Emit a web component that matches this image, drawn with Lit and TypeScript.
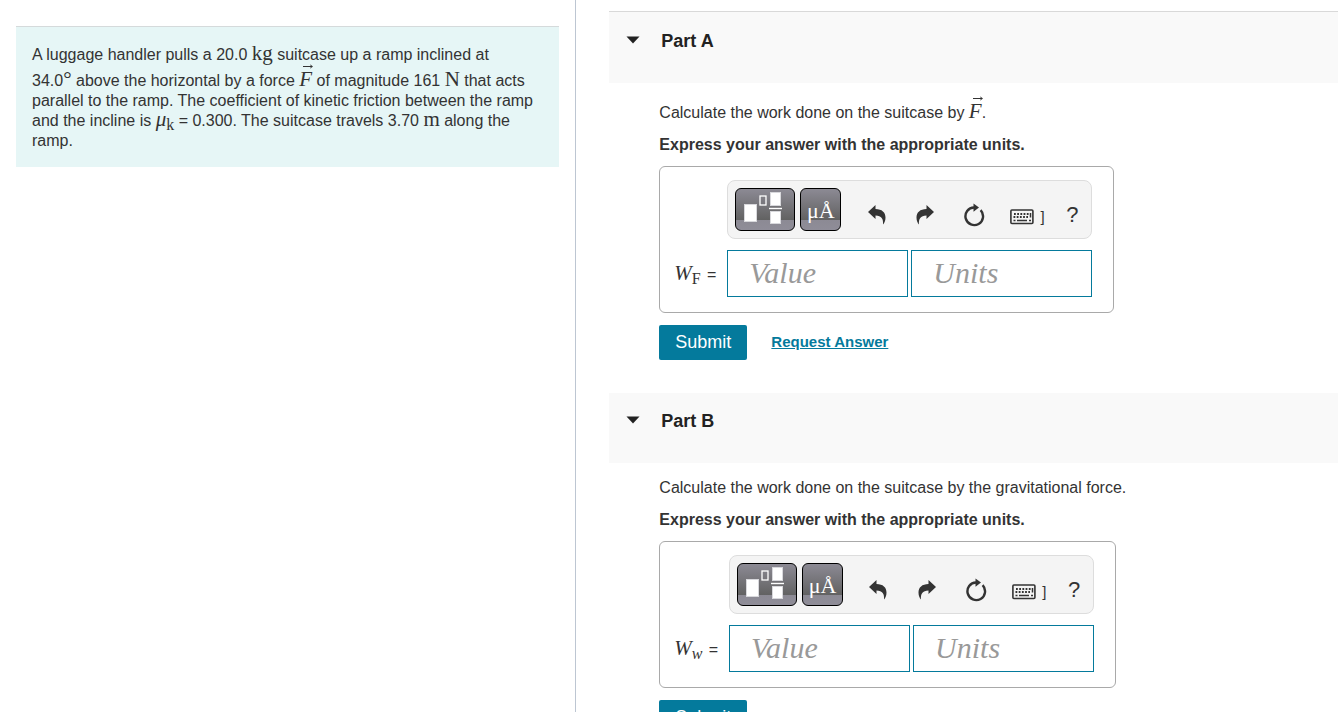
import { LitElement, html, svg, css } from "lit";
import { customElement, property } from "lit/decorators.js";

@customElement("vector-symbol")
class VectorSymbol extends LitElement {
  static styles = css`
    :host {
      display: inline-block;
      position: relative;
      padding-top: 3px;
      font: italic 21px/20px "Liberation Serif", serif;
    }
    .arrow {
      position: absolute;
      bottom: 19px;
      left: 4px;
      width: 11px;
      height: 6px;
    }
  `;
  render() {
    return html`<slot></slot><svg class="arrow" viewBox="0 0 11 6" aria-hidden="true">
        <path d="M0 2.500H9" stroke="#333" fill="none" />
        <path d="M7 0.300L10 2.500L7 4.700L8 2.500Z" fill="#333" />
      </svg>`;
  }
}

const undoShape = svg`<path d="M0 7L7.500 0V4C14 4 17.500 7.500 17.500 12.500C17.500 15.500 16.500 18 15 19.500C15.600 14 13.500 10.500 7.500 10.500V14Z" fill="#333"/>`;

@customElement("answer-box")
class AnswerBox extends LitElement {
  @property() quantity = "";

  static styles = css`
    :host {
      display: block;
      width: fit-content;
      box-sizing: border-box;
      padding: 13px 21px 15px 14px;
      border: 1px solid #a9a9a9;
      border-radius: 6px;
    }
    .grid {
      display: grid;
      grid-template-columns: auto auto;
      align-items: center;
      gap: 11px;
    }
    .toolbar {
      grid-column: 2;
      display: flex;
      align-items: center;
      box-sizing: border-box;
      height: 59px;
      padding: 0 3px 0 7px;
      border: 1px solid #ddd;
      border-radius: 8px;
      background: #f4f4f4;
    }
    button {
      display: flex;
      align-items: center;
      justify-content: center;
      padding: 0;
      border: 0;
      background: none;
      color: #333;
      font: 22px/24px "Liberation Sans", Arial, sans-serif;
    }
    .key {
      box-sizing: border-box;
      width: 60px;
      height: 43px;
      margin-right: 5px;
      border: 1px solid #000;
      border-radius: 6px;
      background: linear-gradient(#8c8a94, #626262 75%, #8c8a94 75%, #8f8d98);
      color: #fff;
      font: 22px/24px "Liberation Serif", serif;
    }
    .units {
      width: 41px;
      margin-right: 11px;
      padding-top: 2px;
    }
    .tool {
      flex: 1 1 49px;
      height: 24px;
      padding-top: 10px;
      box-sizing: content-box;
    }
    .keyboard {
      flex-basis: 58px;
      gap: 6px;
      padding-top: 15px;
      height: 20px;
      font-size: 15px;
      line-height: 16px;
    }
    .help {
      flex-basis: 32px;
    }
    .name {
      font: italic 21px/24px "Liberation Serif", serif;
      white-space: nowrap;
    }
    .equals {
      margin-left: 1px;
      font: 16px/24px "Liberation Sans", Arial, sans-serif;
    }
    .fields {
      display: flex;
      gap: 3px;
    }
    input {
      box-sizing: border-box;
      width: 181px;
      height: 47px;
      padding: 0 21px 2px;
      border: 1px solid #047a9c;
      border-radius: 0;
      background: #fff;
      color: #333;
      font: italic 30px/34px "Liberation Serif", serif;
    }
    input::placeholder {
      color: #999;
      opacity: 1;
    }
  `;

  render() {
    return html`<div class="grid">
      <div class="toolbar" role="toolbar" aria-label="Equation tools">
        <button class="key" aria-label="Templates">
          <svg width="58" height="41" viewBox="0 0 58 41">
            <g fill="#fff" stroke="#d8d8dc">
              <rect x="8.500" y="15.500" width="12" height="17" />
              <rect x="24" y="7" width="6" height="9" fill="none" stroke="#fff" stroke-width="1.300" />
              <rect x="34.500" y="3.500" width="10" height="13" />
              <rect x="34.500" y="22.500" width="10" height="12" />
            </g>
            <path d="M33 19.500H46" stroke="#fff" stroke-width="1.400" />
          </svg>
        </button>
        <button class="key units" aria-label="Units symbols">μÅ</button>
        <button class="tool" aria-label="Undo">
          <svg width="18" height="20" viewBox="0 0 18 20">${undoShape}</svg>
        </button>
        <button class="tool" aria-label="Redo">
          <svg width="18" height="20" viewBox="0 0 18 20">
            <g transform="translate(18 0) scale(-1 1)">${undoShape}</g>
          </svg>
        </button>
        <button class="tool" aria-label="Reset">
          <svg width="22" height="24" viewBox="0 0 22 24">
            <path d="M17.600 7.200A8.800 8.800 0 1 1 11 4.500" fill="none" stroke="#333" stroke-width="2.400" />
            <path d="M10.500 0.500L16 4.600L10.500 8.700Z" fill="#333" />
          </svg>
        </button>
        <button class="tool keyboard" aria-label="Keyboard shortcuts">
          <svg width="24" height="16" viewBox="0 0 24 16">
            <rect x="0.900" y="1" width="22" height="13.500" rx="1" fill="none" stroke="#333" stroke-width="1.600" />
            <path d="M4 5H20M3.500 8H18" stroke="#333" stroke-width="1.800" stroke-dasharray="1.800 1.400" />
            <path d="M7 11.500H17M3.500 11.500H5.500M19 11.500H21M20.500 4V8.500" stroke="#333" stroke-width="1.500" />
          </svg>
          ]
        </button>
        <button class="tool help" aria-label="Help">?</button>
      </div>
      <label class="name" for="value"><slot></slot> <span class="equals">=</span></label>
      <div class="fields">
        <input id="value" placeholder="Value" />
        <input aria-label="${this.quantity} units" placeholder="Units" />
      </div>
    </div>`;
  }
}

@customElement("app-root")
class AppRoot extends LitElement {
  static styles = css`
    :host {
      display: flex;
      height: 100vh;
      overflow: hidden;
      background: #fff;
      color: #333;
      font: 16px/20px "Liberation Sans", Arial, sans-serif;
    }
    .problem {
      box-sizing: border-box;
      flex: 0 0 calc(43% + 1px);
      padding: 26px 16px 0;
      border-right: 1px solid #bdc6d2;
    }
    .statement {
      margin: 0;
      padding: 18px 16px 16px;
      border-top: 1px solid #d5dadb;
      background: #e6f6f6;
    }
    .statement vector-symbol {
      padding-top: 4px;
    }
    .math {
      font: 21px/0 "Liberation Serif", serif;
    }
    .italic {
      font-style: italic;
    }
    .sub {
      position: relative;
      top: 4px;
      font-size: 16px;
      line-height: 0;
    }
    .upright {
      font-style: normal;
    }
    .parts {
      flex: 1;
      min-width: 0;
      padding: 11px 0 0 33px;
    }
    .header {
      display: flex;
      align-items: flex-start;
      box-sizing: border-box;
      height: 70px;
      padding: 18px 0 0 17px;
      background: #f9f9f9;
    }
    .part:first-child .header {
      height: 72px;
      padding-top: 19px;
      border-top: 1px solid #d9d9d9;
    }
    .toggle {
      display: flex;
      align-items: center;
      width: 35px;
      height: 18px;
      padding: 0;
      border: 0;
      background: none;
    }
    h2 {
      margin: 0;
      color: #222;
      font-size: 18px;
      line-height: 20px;
    }
    .body {
      padding: 15px 16px 33px 50px;
    }
    .question {
      margin: 0 0 12px;
    }
    .instruction {
      margin: 0 0 11px;
      font-weight: bold;
    }
    .actions {
      display: flex;
      align-items: center;
      gap: 24px;
      margin-top: 12px;
    }
    .submit {
      height: 35px;
      padding: 0 16px 2px;
      border: 0;
      border-radius: 2px;
      background: #047a9c;
      color: #fff;
      font: 18px/20px "Liberation Sans", Arial, sans-serif;
    }
    .request {
      padding-bottom: 2px;
      color: #047a9c;
      font-size: 15px;
      font-weight: bold;
    }
  `;

  part(title: string, question: unknown, name: unknown) {
    return html`<section class="part">
      <div class="header">
        <button class="toggle" aria-label="Toggle ${title}">
          <svg width="14" height="8" viewBox="0 0 14 8"><path d="M0.500 0.500H13.500L7 7.500Z" fill="#222" /></svg>
        </button>
        <h2>${title}</h2>
      </div>
      <div class="body">
        <p class="question">${question}</p>
        <p class="instruction">Express your answer with the appropriate units.</p>
        <answer-box quantity="Work">${name}</answer-box>
        <div class="actions">
          <button class="submit">Submit</button>
          <a class="request" href="#">Request Answer</a>
        </div>
      </div>
    </section>`;
  }

  render() {
    return html`
      <aside class="problem">
        <p class="statement">
          A luggage handler pulls a 20.0 <span class="math">kg</span> suitcase up a ramp inclined at<br />
          34.0<span class="math">°</span> above the horizontal by a force
          <vector-symbol>F</vector-symbol> of magnitude 161 <span class="math">N</span> that acts<br />
          parallel to the ramp. The coefficient of kinetic friction between the ramp<br />
          and the incline is
          <span class="math"><span class="italic">μ</span><span class="sub">k</span></span> = 0.300. The
          suitcase travels 3.70 <span class="math">m</span> along the<br />
          ramp.
        </p>
      </aside>
      <main class="parts">
        ${this.part(
          "Part A",
          html`Calculate the work done on the suitcase by <vector-symbol>F</vector-symbol>.`,
          html`W<span class="sub upright">F</span>`
        )}
        ${this.part(
          "Part B",
          "Calculate the work done on the suitcase by the gravitational force.",
          html`W<span class="sub">w</span>`
        )}
      </main>
    `;
  }
}
